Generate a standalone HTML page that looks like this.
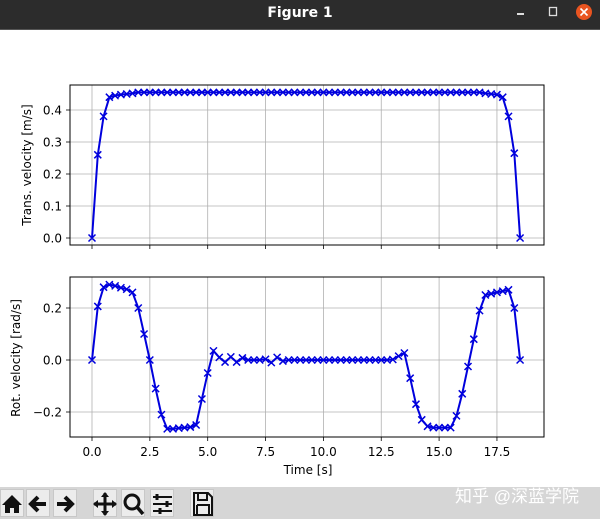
<!DOCTYPE html>
<html><head><meta charset="utf-8"><style>
html,body{margin:0;padding:0;width:600px;height:519px;overflow:hidden;background:#fff;font-family:"DejaVu Sans","Liberation Sans",sans-serif}
.title{position:absolute;left:0;top:0;width:600px;height:29px;background:#2c2c2c;color:#fff;font-weight:bold;font-size:14px;text-align:center;line-height:27px;border-bottom:1px solid #555}
.tb{position:absolute;left:0;top:487px;width:600px;height:32px;background:#d6d6d6}
.btn{position:absolute;top:2px;height:28px;width:24px;background:#ececec;border:1px solid #c8c8c8;box-sizing:border-box}
.wm{position:absolute;left:455px;top:-5px;color:#fff;font-size:17px;font-family:"Liberation Sans","Noto Sans CJK SC",sans-serif}
</style></head><body>
<div class="title">Figure 1
<svg width="600" height="29" style="position:absolute;left:0;top:0">
<rect x="517" y="13" width="7" height="2" fill="#ddd"/>
<rect x="549.5" y="7.5" width="7" height="8" fill="none" stroke="#ddd" stroke-width="1.3"/>
<circle cx="584" cy="12" r="8" fill="#e95420"/>
<path d="M580.5 8.5 L587.5 15.5 M587.5 8.5 L580.5 15.5" stroke="#fff" stroke-width="1.6"/>
</svg></div>
<svg id="s" width="600" height="519" style="position:absolute;left:0;top:0" font-family="DejaVu Sans, Liberation Sans, sans-serif" font-size="12"></svg>
<div class="tb">
<div class="btn" style="left:0"></div><div class="btn" style="left:26px"></div><div class="btn" style="left:53px"></div>
<div class="btn" style="left:93px"></div><div class="btn" style="left:121px"></div><div class="btn" style="left:150px"></div>
<div class="btn" style="left:190px"></div>
<svg width="230" height="32" style="position:absolute;left:0;top:0">
<path d="M12 8 L2 18 H5 V26 H10 V21 H14 V26 H19 V18 H22 Z" fill="#111"/>
<path d="M46 17 H32 M38 10 L31 17 L38 24" stroke="#111" stroke-width="4" fill="none"/>
<path d="M57 17 H71 M65 10 L72 17 L65 24" stroke="#111" stroke-width="4" fill="none"/>
<path d="M105 6 V28 M94 17 H116" stroke="#111" stroke-width="3"/>
<path d="M101 10 L105 5 L109 10 Z M101 24 L105 29 L109 24 Z M98 13 L93 17 L98 21 Z M112 13 L117 17 L112 21 Z" fill="#111"/>
<circle cx="132" cy="15" r="7" stroke="#111" stroke-width="3" fill="none"/>
<path d="M137 20 L143 27" stroke="#111" stroke-width="3.5"/>
<path d="M153 10 H172 M153 17 H172 M153 24 H172" stroke="#111" stroke-width="2"/>
<path d="M157 7 V13 M167 14 V20 M160 21 V27" stroke="#111" stroke-width="3"/>
<path d="M194 6 H208 L212 10 V28 H194 Z" stroke="#111" stroke-width="2" fill="none"/>
<path d="M198 6 V13 H207 V6 M197 18 H209 V28 M197 18 V28" stroke="#111" stroke-width="2" fill="none"/>
</svg>
<div class="wm">知乎 @深蓝学院</div>
</div>
<script>
var s=document.getElementById('s'),h='';
function X(t){return 92+t*23.14}
function grid(top,bot,yt){
 for(var i=0;i<=7;i++){var x=X(i*2.5);h+='<line x1="'+x+'" y1="'+top+'" x2="'+x+'" y2="'+bot+'" stroke="#b0b0b0" stroke-width="0.8"/>';h+='<line x1="'+x+'" y1="'+bot+'" x2="'+x+'" y2="'+(bot+4)+'" stroke="#000" stroke-width="0.8"/>';}
 yt.forEach(function(y){h+='<line x1="70" y1="'+y+'" x2="544" y2="'+y+'" stroke="#b0b0b0" stroke-width="0.8"/><line x1="66" y1="'+y+'" x2="70" y2="'+y+'" stroke="#000" stroke-width="0.8"/>';});
}
function plot(v,y0,sc){var p=[],m='';v.forEach(function(a,i){var x=X(i*0.25),y=y0-a*sc;p.push(x.toFixed(1)+','+y.toFixed(1));m+='M'+(x-3.5)+' '+(y-3.5)+'l7 7M'+(x-3.5)+' '+(y+3.5)+'l7 -7';});
 h+='<polyline points="'+p.join(' ')+'" fill="none" stroke="#0000dd" stroke-width="2"/><path d="'+m+'" stroke="#0000dd" stroke-width="1.5" fill="none"/>';}
var tv=[0,0.26,0.38,0.44,0.445,0.448,0.45,0.452];
for(var k=0;k<60;k++)tv.push(0.455);
tv.push(0.452,0.45,0.448,0.44,0.38,0.265,0);
grid(85,245,[110,142,174,206,238]);
plot(tv,238,320);
h+='<rect x="70" y="85" width="474" height="160" fill="none" stroke="#000" stroke-width="1"/>';
[0,0.1,0.2,0.3,0.4].forEach(function(v){h+='<text x="62" y="'+(238-v*320+4.5)+'" text-anchor="end">'+v.toFixed(1)+'</text>';});
h+='<text transform="translate(31,165) rotate(-90)" text-anchor="middle">Trans. velocity [m/s]</text>';
var rv=[0,0.206,0.28,0.29,0.285,0.278,0.272,0.26,0.2,0.1,0,-0.11,-0.21,-0.265,-0.265,-0.262,-0.26,-0.258,-0.25,-0.15,-0.05,0.035,0.01,-0.008,0.012,-0.008,0.008,0,0,0,0.003,-0.01,0.01,-0.004,0,0,0,0,0,0,0,0,0,0,0,0,0,0,0,0,0,0,0,0.002,0.015,0.027,-0.07,-0.17,-0.23,-0.255,-0.26,-0.26,-0.26,-0.26,-0.215,-0.13,-0.025,0.08,0.19,0.25,0.255,0.26,0.265,0.27,0.2,0];
while(rv.length>75)rv.splice(40,1);
while(rv.length<75)rv.splice(40,0,0);
grid(277,437,[308,360,412]);
plot(rv,360,260);
h+='<rect x="70" y="277" width="474" height="160" fill="none" stroke="#000" stroke-width="1"/>';
[[0.2,'0.2'],[0,'0.0'],[-0.2,'−0.2']].forEach(function(v){h+='<text x="62" y="'+(360-v[0]*260+4.5)+'" text-anchor="end">'+v[1]+'</text>';});
h+='<text transform="translate(20,358) rotate(-90)" text-anchor="middle">Rot. velocity [rad/s]</text>';
for(var i=0;i<=7;i++)h+='<text x="'+X(i*2.5)+'" y="456" text-anchor="middle">'+(i*2.5).toFixed(1)+'</text>';
h+='<text x="308" y="474" text-anchor="middle">Time [s]</text>';
s.innerHTML=h;
</script>
</body></html>
